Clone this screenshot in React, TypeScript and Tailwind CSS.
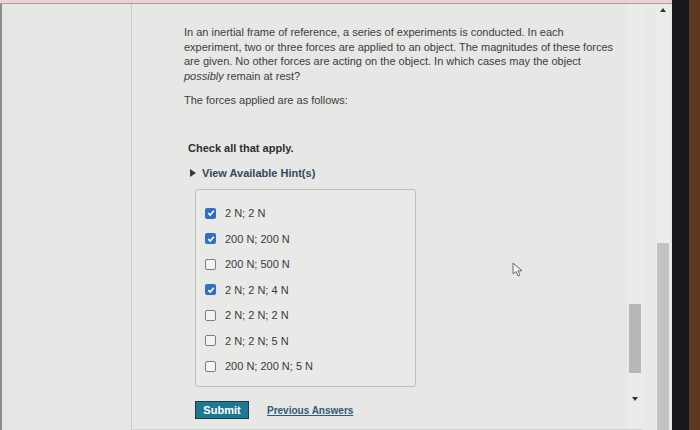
import React from 'react';

const options = [
  { label: '2 N; 2 N', checked: true },
  { label: '200 N; 200 N', checked: true },
  { label: '200 N; 500 N', checked: false },
  { label: '2 N; 2 N; 4 N', checked: true },
  { label: '2 N; 2 N; 2 N', checked: false },
  { label: '2 N; 2 N; 5 N', checked: false },
  { label: '200 N; 200 N; 5 N', checked: false },
];

const CheckBox: React.FC<{ checked: boolean }> = ({ checked }) =>
  checked ? (
    <span className="flex h-[11px] w-[11px] items-center justify-center rounded-[2px] bg-[#2f6fc4]">
      <svg width="8" height="8" viewBox="0 0 8 8">
        <path d="M1.3 4.2 L3.2 6 L6.8 1.8" fill="none" stroke="#fff" strokeWidth="1.6" />
      </svg>
    </span>
  ) : (
    <span className="h-[11px] w-[11px] rounded-[2px] border border-[#7d7d7d] bg-[#f3f3f1]" />
  );

export default function App() {
  return (
    <div
      className="relative flex h-[430px] w-[700px] overflow-hidden bg-[#4a3020]"
      style={{ fontFamily: '"Liberation Sans", Arial, sans-serif' }}
    >
      {/* screen */}
      <div className="flex w-[672px] flex-col bg-[#e7e7e5]">
        <div className="h-[3px] bg-[#ecd0d4]" />
        <div className="h-px bg-[#a8a4a5]" />
        <div className="flex flex-1 border-l-2 border-[#8c8c8c]">
          {/* left pane */}
          <div className="w-[130px] border-r border-[#c9c9c7] bg-[#e6e6e4]" />

          {/* question */}
          <div className="flex w-[495px] flex-col whitespace-nowrap border-b border-[#d4d4d2] pl-[52px] pt-[21px] text-[#3d3d3d]">
            <p className="text-[11px] leading-[14.5px]">
              In an inertial frame of reference, a series of experiments is conducted. In each
              <br />
              experiment, two or three forces are applied to an object. The magnitudes of these forces
              <br />
              are given. No other forces are acting on the object. In which cases may the object
              <br />
              <i>possibly</i> remain at rest?
            </p>
            <p className="mt-[10px] text-[11px] leading-[14.5px]">The forces applied are as follows:</p>

            <p className="ml-[4px] mt-[33px] text-[11px] font-bold leading-[14px] text-[#2e2e2e]">
              Check all that apply.
            </p>
            <div className="ml-[6px] mt-[11px] flex items-center gap-[6px] text-[11px] font-bold leading-[14px] text-[#34495a]">
              <svg width="6" height="8" viewBox="0 0 6 8">
                <path d="M0 0 L6 4 L0 8 Z" fill="#2d3c48" />
              </svg>
              View Available Hint(s)
            </div>

            <div className="ml-[11px] mt-[9px] w-[221px] rounded-[3px] border border-[#bfbfbd] bg-[#e9e9e7] pb-[7px] pl-[9px] pt-[11px]">
              {options.map((o) => (
                <div key={o.label} className="flex h-[25.5px] items-center gap-[9px]">
                  <CheckBox checked={o.checked} />
                  <span className="text-[11px] text-[#3a3a3a]">{o.label}</span>
                </div>
              ))}
            </div>

            <div className="ml-[11px] mt-[14px] flex items-center gap-[18px]">
              <button className="h-[18px] w-[54px] border border-[#1e3a44] bg-[#1f7893] text-[11px] font-bold leading-none text-white">
                Submit
              </button>
              <span className="text-[10px] font-bold text-[#2f5a78] underline">Previous Answers</span>
            </div>
          </div>

          {/* inner scrollbar */}
          <div className="flex w-[16px] flex-col items-center border-b border-[#d4d4d2] bg-[#ebebe9] pb-[28px] pt-[300px]">
            <div className="h-[69px] w-[12px] bg-[#b7b7b5]" />
            <div className="mt-auto h-0 w-0 border-l-[3px] border-r-[3px] border-t-[4px] border-l-transparent border-r-transparent border-t-[#333]" />
          </div>
          <div className="w-[13px] bg-[#e9e9e7]" />

          {/* outer scrollbar */}
          <div className="flex w-[14px] flex-col items-center bg-[#ececea] pt-[4px]">
            <div className="h-0 w-0 border-b-[4px] border-l-[3px] border-r-[3px] border-b-[#333] border-l-transparent border-r-transparent" />
            <div className="mt-[231px] w-[12px] flex-1 bg-[#c2c2c0]" />
          </div>
        </div>
      </div>

      {/* bezel */}
      <div className="w-[17px] bg-[#18181c]" />
      <div className="flex-1 bg-[#5a3822]" />

      {/* cursor */}
      <svg className="absolute left-[512px] top-[262px]" width="12" height="16" viewBox="0 0 12 16">
        <path d="M1 1 L1 12 L4 9.5 L6 14 L8 13 L6 8.8 L10 8.8 Z" fill="#f4f4f4" stroke="#6a6a6a" strokeWidth="1" />
      </svg>
    </div>
  );
}
